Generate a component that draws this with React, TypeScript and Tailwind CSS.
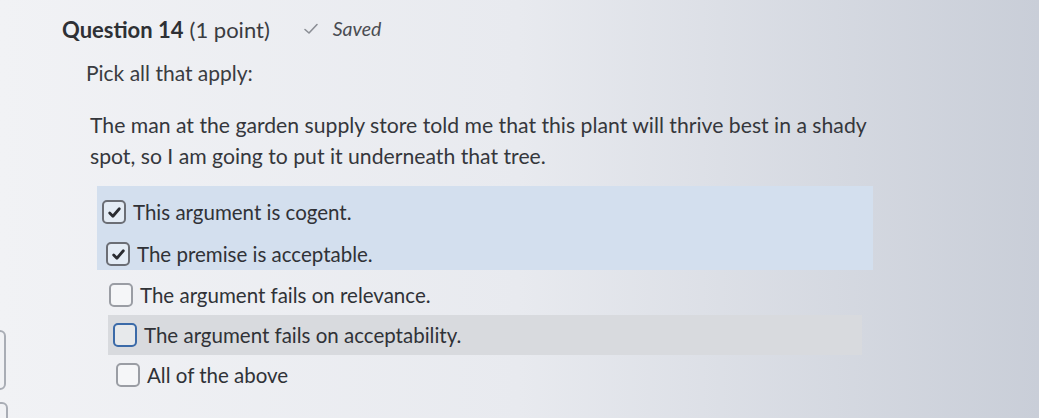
import React from 'react';

const options = [
    { label: 'This argument is cogent.', checked: true, pad: 'pl-[5px]' },
    { label: 'The premise is acceptable.', checked: true, pad: 'pl-[9px]' },
    { label: 'The argument fails on relevance.', checked: false, pad: 'pl-[12px]' },
    { label: 'The argument fails on acceptability.', checked: false, pad: 'pl-[16px]', hover: true },
    { label: 'All of the above', checked: false, pad: 'pl-[19px]' },
];

function Box({ checked, focus }: { checked: boolean; focus?: boolean }) {
    return (
        <span
            className={`w-[24px] h-[24px] shrink-0 rounded-[5px] border-2 flex items-center justify-center bg-white/40 ${
                focus ? 'border-[#3b6aa8]' : checked ? 'border-[#6b6e75]' : 'border-[#9a9da4]'
            }`}
        >
            {checked && (
                <svg width="15" height="15" viewBox="0 0 14 14" fill="none">
                    <path d="M2.5 7.5 L5.5 10.5 L11.5 3.5" stroke="#2a2c31" strokeWidth="2.6" strokeLinecap="round" strokeLinejoin="round" />
                </svg>
            )}
        </span>
    );
}

export default function App() {
    return (
        <div
            className="relative w-[1039px] h-[418px] overflow-hidden bg-gradient-to-r from-[#f1f2f5] via-[#e8eaef] to-[#c9ced8] text-[#383a3f]"
            style={{ fontFamily: 'Lato, "Open Sans", sans-serif' }}
        >
            {/* partial control on left edge */}
            <div className="absolute -left-[14px] top-[330px] w-[20px] h-[60px] rounded-[6px] border-2 border-[#a9adb5]" />
            <div className="absolute -left-[14px] top-[402px] w-[22px] h-[40px] rounded-[6px] border-2 border-[#a9adb5]" />

            <div className="pl-[62px] pt-[14px]">
                <div className="flex items-center h-[30px]">
                    <span className="text-[22px] font-bold text-[#2e3035]">Question 14</span>
                    <span className="text-[22px] ml-[6px] text-[#3a3c41]">(1 point)</span>
                    <svg className="ml-[33px]" width="16" height="14" viewBox="0 0 16 14" fill="none">
                        <path d="M2 7.5 L6 11 L14 2.5" stroke="#8b8e95" strokeWidth="1.6" strokeLinecap="round" strokeLinejoin="round" />
                    </svg>
                    <span className="ml-[14px] text-[19.5px] italic text-[#4a4c52]">Saved</span>
                </div>

                <p className="mt-[14px] ml-[24px] text-[21px] leading-[30px] text-[#3a3c41]">Pick all that apply:</p>

                <p className="mt-[22px] ml-[28px] w-[800px] text-[21.2px] leading-[31px] text-[#35373c]">
                    The man at the garden supply store told me that this plant will thrive best in a shady spot, so I am going to put it underneath that tree.
                </p>

                <div className="mt-[14px] ml-[35px] w-[776px]">
                    <div className="bg-[#d3dfee] pt-[5px] h-[84px]">
                        {options.slice(0, 2).map((o) => (
                            <label key={o.label} className={`flex items-center gap-[7px] h-[42px] ${o.pad}`}>
                                <Box checked={o.checked} />
                                <span className="text-[20.5px] text-[#303237]">{o.label}</span>
                            </label>
                        ))}
                    </div>
                    <div className="pt-[5px]">
                        {options.slice(2).map((o) => (
                            <label
                                key={o.label}
                                className={`flex items-center gap-[7px] h-[40px] ${o.pad} ${
                                    o.hover ? 'bg-[#d8dade] ml-[11px] mr-[11px] !pl-[5px]' : ''
                                }`}
                            >
                                <Box checked={o.checked} focus={o.hover} />
                                <span className="text-[20.5px] text-[#303237]">{o.label}</span>
                            </label>
                        ))}
                    </div>
                </div>
            </div>
        </div>
    );
}
